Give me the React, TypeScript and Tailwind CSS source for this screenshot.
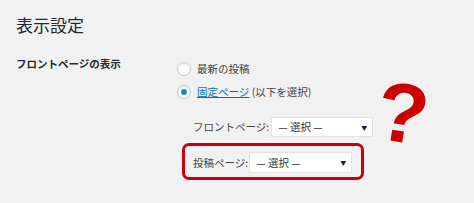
import React from "react";

function Radio({ checked }: { checked?: boolean }) {
  return (
    <span className="flex h-[14px] w-[14px] shrink-0 items-center justify-center rounded-full border border-[#c3c7cb] bg-white shadow-[inset_0_1px_2px_rgba(0,0,0,0.1)]">
      {checked ? <span className="h-[6px] w-[6px] rounded-full bg-[#1e8cbe]" /> : null}
    </span>
  );
}

function FakeSelect({ width, height }: { width: string; height: string }) {
  return (
    <div
      className={`flex shrink-0 items-center justify-between border border-[#e4e4e4] bg-white pl-[6px] pr-[5px] text-[10.5px] text-[#32373c] ${width} ${height}`}
    >
      <span>— 選択 —</span>
      <span className="text-[6px] text-[#222]">▼</span>
    </div>
  );
}

export default function App() {
  return (
    <div
      className="relative h-[203px] w-[474px] overflow-hidden bg-[#f1f1f1] text-[#444]"
      style={{ fontFamily: '"Noto Sans CJK JP", "Noto Sans", sans-serif' }}
    >
      <h1 className="pl-4 pt-[14px] text-[17px] leading-[22px] text-[#23282d]">表示設定</h1>

      <div className="mt-[21px] flex">
        <div className="w-[177px] shrink-0 pl-4 text-[10.5px] font-bold leading-[14px] text-[#23282d]">
          フロントページの表示
        </div>
        <div className="pt-[5px]">
          <label className="flex h-[14px] items-center gap-[6px] text-[10.5px]">
            <Radio />
            <span>最新の投稿</span>
          </label>
          <label className="mt-[9px] flex h-[14px] items-center gap-[6px] whitespace-nowrap text-[10.5px]">
            <Radio checked />
            <span>
              <span className="text-[#0073aa] underline">固定ページ</span> (以下を選択)
            </span>
          </label>

          <div className="ml-[16px] mt-[18px] flex items-center gap-[2px] whitespace-nowrap text-[10.5px]">
            <span>フロントページ:</span>
            <FakeSelect width="w-[102px]" height="h-[20px]" />
          </div>

          <div className="ml-[5px] mt-[6px] flex w-[182px] items-center gap-[1px] whitespace-nowrap rounded-[7px] border-[3px] border-[#c8000a] pb-[4px] pl-[8px] pr-[6px] pt-[6px] text-[10.5px]">
            <span>投稿ページ:</span>
            <FakeSelect width="w-[103px]" height="h-[21px]" />
          </div>
        </div>
      </div>

      <span
        className="absolute left-[377px] top-[80px] rotate-[9deg] text-[84px] font-bold leading-[0.8] text-[#cc0000]"
        style={{ fontFamily: '"Liberation Sans", Arial, sans-serif' }}
      >
        ?
      </span>
    </div>
  );
}
